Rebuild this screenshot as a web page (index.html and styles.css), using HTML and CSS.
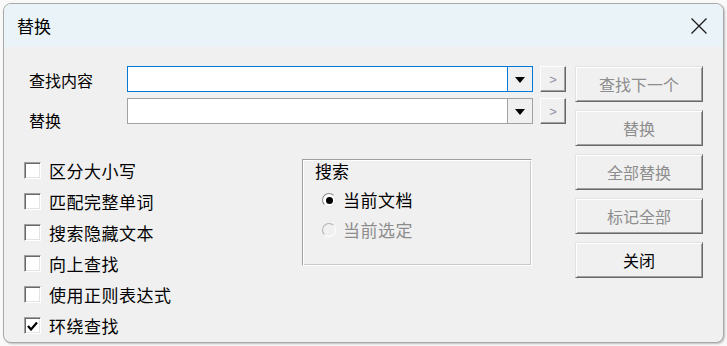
FILE: index.html
```html
<!DOCTYPE html>
<html lang="zh">
<head>
<meta charset="utf-8">
<title>替换</title>
<link rel="stylesheet" href="styles.css">
</head>
<body>
<div class="window">
  <div class="titlebar">
    <span class="title">替换</span>
    <svg class="close" width="16" height="16" viewBox="0 0 16 16"><path d="M0.5 0.5 L15.5 15.5 M15.5 0.5 L0.5 15.5" stroke="#1b1b1b" stroke-width="1.3" fill="none"/></svg>
  </div>
  <div class="content">
    <div class="main">
      <div class="field-row">
        <span class="field-label">查找内容</span>
        <div class="combo focused"><div class="combo-input"></div><div class="combo-btn"><span class="tri"></span></div></div>
        <div class="mini">&gt;</div>
      </div>
      <div class="field-row">
        <span class="field-label low">替换</span>
        <div class="combo"><div class="combo-input"></div><div class="combo-btn"><span class="tri"></span></div></div>
        <div class="mini">&gt;</div>
      </div>
      <div class="lower">
        <div class="checks">
          <div class="check-row"><span class="box"></span><span class="check-text">区分大小写</span></div>
          <div class="check-row"><span class="box"></span><span class="check-text">匹配完整单词</span></div>
          <div class="check-row"><span class="box"></span><span class="check-text">搜索隐藏文本</span></div>
          <div class="check-row"><span class="box"></span><span class="check-text">向上查找</span></div>
          <div class="check-row"><span class="box"></span><span class="check-text">使用正则表达式</span></div>
          <div class="check-row"><span class="box checked"><svg width="11" height="10" viewBox="0 0 11 10"><path d="M1 5 L4 8.5 L10 1.5" stroke="#000" stroke-width="2.2" fill="none"/></svg></span><span class="check-text">环绕查找</span></div>
        </div>
        <div class="group">
          <div class="group-title">搜索</div>
          <div class="radio-row"><span class="radio on"></span><span class="radio-text">当前文档</span></div>
          <div class="radio-row disabled"><span class="radio"></span><span class="radio-text">当前选定</span></div>
        </div>
      </div>
    </div>
    <div class="buttons">
      <div class="btn disabled">查找下一个</div>
      <div class="btn disabled">替换</div>
      <div class="btn disabled">全部替换</div>
      <div class="btn disabled">标记全部</div>
      <div class="btn">关闭</div>
    </div>
  </div>
</div>
</body>
</html>
```

FILE: styles.css
```css
* { box-sizing: border-box; }
html, body { margin: 0; padding: 0; }
body {
  background: #f9f9f9;
  font-family: "Noto Sans CJK SC", "Noto Sans", sans-serif;
  color: #000;
  width: 727px;
  height: 346px;
  overflow: hidden;
}
.window {
  margin: 3px 0 0 3px;
  width: 721px;
  height: 340px;
  border: 1px solid #a9a9a9;
  border-radius: 8px;
  background: #f0f0f0;
  overflow: hidden;
  box-shadow: 1px 1px 2px rgba(0,0,0,0.25);
  display: flex;
  flex-direction: column;
}
.titlebar {
  height: 43px;
  background: #eaf3f8;
  display: flex;
  align-items: center;
  justify-content: space-between;
  padding: 0 16px 0 13px;
  flex: none;
}
.title { font-size: 17px; line-height: 20px; }
.close { display: block; margin-top: 1px; }
.content {
  display: flex;
  padding: 19px 0 0 20px;
  gap: 9px;
}
.main { width: 542px; display: flex; flex-direction: column; }
.field-row {
  display: flex;
  align-items: center;
  height: 26px;
}
.field-row + .field-row { margin-top: 6px; }
.field-label {
  width: 103px;
  flex: none;
  padding-left: 5px;
  font-size: 16px;
  line-height: 20px;
  font-weight: 400;
  position: relative;
  top: 1px;
}
.field-label.low { top: 9px; }
.combo {
  width: 406px;
  flex: none;
  height: 26px;
  border: 1px solid #a2a2a2;
  display: flex;
  background: #fff;
}
.combo.focused { border-color: #0078d7; }
.combo-input { flex: 1; }
.combo-btn {
  width: 25px;
  border-left: 1px solid #a2a2a2;
  background: #f0f0f0;
  display: flex;
  align-items: center;
  justify-content: center;
}
.combo.focused .combo-btn { border-left-color: #0078d7; }
.tri {
  width: 0; height: 0;
  border-left: 5px solid transparent;
  border-right: 5px solid transparent;
  border-top: 6px solid #000;
  margin-top: 1px;
}
.mini {
  margin-left: 7px;
  width: 26px;
  flex: none;
  height: 26px;
  background: #f0f0f0;
  border: 1px solid;
  border-color: #fdfdfd #696969 #696969 #fdfdfd;
  box-shadow: inset -1px -1px #a0a0a0;
  color: #8e8ea6;
  font-family: "Liberation Sans", sans-serif;
  font-size: 13px;
  display: flex;
  align-items: center;
  justify-content: center;
}
.lower { display: flex; margin-top: 31px; }
.checks { width: 278px; flex: none; }
.check-row {
  height: 31px;
  display: flex;
  align-items: center;
}
.box {
  width: 17px;
  height: 17px;
  background: #fff;
  border: 1px solid;
  border-color: #a0a0a0 #fff #fff #a0a0a0;
  box-shadow: inset 1px 1px #696969, inset -1px -1px #e3e3e3;
  display: flex;
  align-items: center;
  justify-content: center;
  margin-right: 8px;
}
.check-text, .radio-text { font-size: 17px; line-height: 20px; letter-spacing: 0.5px; }
.group {
  margin-top: 4px;
  width: 230px;
  height: 107px;
  border: 1px solid;
  border-color: #a0a0a0 #fff #fff #a0a0a0;
  box-shadow: inset 1px 1px #fff, inset -1px -1px #c8c8c8;
}
.group-title {
  height: 22px;
  line-height: 22px;
  padding-left: 12px;
  font-size: 17px;
}
.radio-row {
  height: 30px;
  display: flex;
  align-items: center;
  padding-left: 19px;
}
.group-title + .radio-row { margin-top: 3px; }
.radio {
  width: 14px;
  height: 14px;
  border-radius: 50%;
  background: #fff;
  border: 1px solid;
  border-color: #8a8a8a #e8e8e8 #e8e8e8 #8a8a8a;
  display: flex;
  align-items: center;
  justify-content: center;
  margin-right: 7px;
}
.radio.on::after {
  content: "";
  width: 7px;
  height: 7px;
  border-radius: 50%;
  background: #000;
}
.radio-row.disabled .radio { background: #f0f0f0; border-color: #b4b4b4 #fff #fff #b4b4b4; }
.radio-row.disabled .radio-text { color: #8d8d8d; }
.buttons {
  display: flex;
  flex-direction: column;
  gap: 8px;
}
.btn {
  width: 128px;
  height: 36px;
  background: #f0f0f0;
  border: 1px solid;
  border-color: #e3e3e3 #696969 #696969 #e3e3e3;
  box-shadow: inset 1px 1px #fff, inset -1px -1px #a0a0a0;
  display: flex;
  align-items: center;
  justify-content: center;
  font-size: 16px;
  line-height: 20px;
  color: #000;
}
.btn.disabled { color: #8d8d8d; }
```
